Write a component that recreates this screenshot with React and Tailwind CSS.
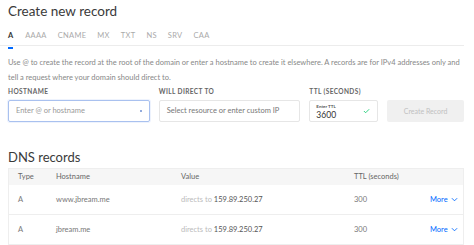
import React from "react";

const tabs = ["A", "AAAA", "CNAME", "MX", "TXT", "NS", "SRV", "CAA"];

const records = [
  { type: "A", host: "www.jbream.me", value: "159.89.250.27", ttl: "300" },
  { type: "A", host: "jbream.me", value: "159.89.250.27", ttl: "300" },
];

function Chevron() {
  return (
    <svg width="7" height="5" viewBox="0 0 8 5" fill="none" className="ml-[3px]">
      <path d="M1 1l3 3 3-3" stroke="#0069ff" strokeWidth="1" />
    </svg>
  );
}

export default function App() {
  return (
    <div className="w-[474px] h-[245px] overflow-hidden bg-white text-[#444] font-['Lato',sans-serif]">
      <div className="pl-2 pr-[10px] pt-[1px]">
        {/* Create new record */}
        <h1 className="text-[13.5px] leading-[20px] text-[#3a3a3a]">Create new record</h1>

        <div className="mt-[6px] flex border-b border-[#ececec] h-[19px] -ml-2 pl-2 pt-[1px]">
          {tabs.map((t, i) => (
            <div
              key={t}
              className={
                i === 0
                  ? "relative mr-[12px] text-[7.5px] font-bold text-[#333] leading-[15px]"
                  : "relative mr-[11px] text-[7.5px] text-[#aaa] tracking-[0.3px] leading-[15px]"
              }
            >
              {t}
              {i === 0 && <div className="absolute left-0 right-0 bottom-[-4px] h-[2px] bg-[#0069ff]" />}
            </div>
          ))}
        </div>

        <p className="mt-[9px] text-[7.5px] leading-[15px] text-[#888]">
          Use @ to create the record at the root of the domain or enter a hostname to create it elsewhere. A records are for IPv4 addresses only and tell a request where your domain should direct to.
        </p>

        {/* Form */}
        <div className="mt-[2px] flex gap-[9px]">
          <div className="w-[142px]">
            <div className="text-[6.5px] font-bold tracking-[0.4px] text-[#666] leading-[10px]">HOSTNAME</div>
            <div className="mt-[3px] h-[22px] border border-[#a9c1ef] rounded-[2px] flex items-center px-[7px] shadow-[0_0_0_1px_#eef3fd]">
              <span className="flex-1 text-[7.5px] text-[#999]">Enter @ or hostname</span>
              <span className="w-[2px] h-[2px] rounded-full bg-[#6f8fd0]" />
            </div>
          </div>
          <div className="w-[142px]">
            <div className="text-[6.5px] font-bold tracking-[0.4px] text-[#666] leading-[10px]">WILL DIRECT TO</div>
            <div className="mt-[3px] h-[22px] border border-[#e6e6e6] rounded-[2px] flex items-center px-[7px]">
              <span className="text-[7.5px] text-[#777]">Select resource or enter custom IP</span>
            </div>
          </div>
          <div className="w-[69px]">
            <div className="text-[6.5px] font-bold tracking-[0.4px] text-[#666] leading-[10px]">TTL (SECONDS)</div>
            <div className="mt-[3px] h-[22px] border border-[#e6e6e6] rounded-[2px] flex items-center pl-[6px] pr-[7px]">
              <div className="flex-1 flex flex-col pt-[1px]">
                <span className="text-[4.5px] font-bold text-[#555] leading-[6px]">Enter TTL</span>
                <span className="text-[8.5px] text-[#333] leading-[10px]">3600</span>
              </div>
              <svg width="7" height="6" viewBox="0 0 8 6" fill="none">
                <path d="M1 3l2 2 4-4" stroke="#15cd72" strokeWidth="1" />
              </svg>
            </div>
          </div>
          <div className="w-[77px] flex flex-col">
            <div className="h-[10px]" />
            <div className="mt-[3px] h-[22px] bg-[#f0f0f0] rounded-[2px] flex items-center justify-center text-[7px] text-[#c0c0c0]">
              Create Record
            </div>
          </div>
        </div>

        {/* DNS records */}
        <h2 className="mt-[25px] text-[13px] leading-[20px] text-[#3a3a3a]">DNS records</h2>

        <div className="mt-[1px] w-[456px] border border-[#eeeeee] border-b-0 text-[7.5px]">
          <div className="h-[16px] flex items-center bg-[#f6f6f6] text-[#666]">
            <div className="w-[47px] pl-[9px]">Type</div>
            <div className="w-[125px]">Hostname</div>
            <div className="w-[173px]">Value</div>
            <div className="flex-1">TTL (seconds)</div>
          </div>
          {records.map((r, i) => (
            <div key={i} className="h-[30px] flex items-center border-b border-[#eeeeee] text-[#777]">
              <div className="w-[47px] pl-[9px]">{r.type}</div>
              <div className="w-[125px]">{r.host}</div>
              <div className="w-[173px]">
                <span className="text-[#bbb]">directs to </span>
                <span className="text-[#555]">{r.value}</span>
              </div>
              <div className="w-[76px]">{r.ttl}</div>
              <div className="flex items-center text-[#0069ff]">
                More
                <Chevron />
              </div>
            </div>
          ))}
        </div>
      </div>
    </div>
  );
}
